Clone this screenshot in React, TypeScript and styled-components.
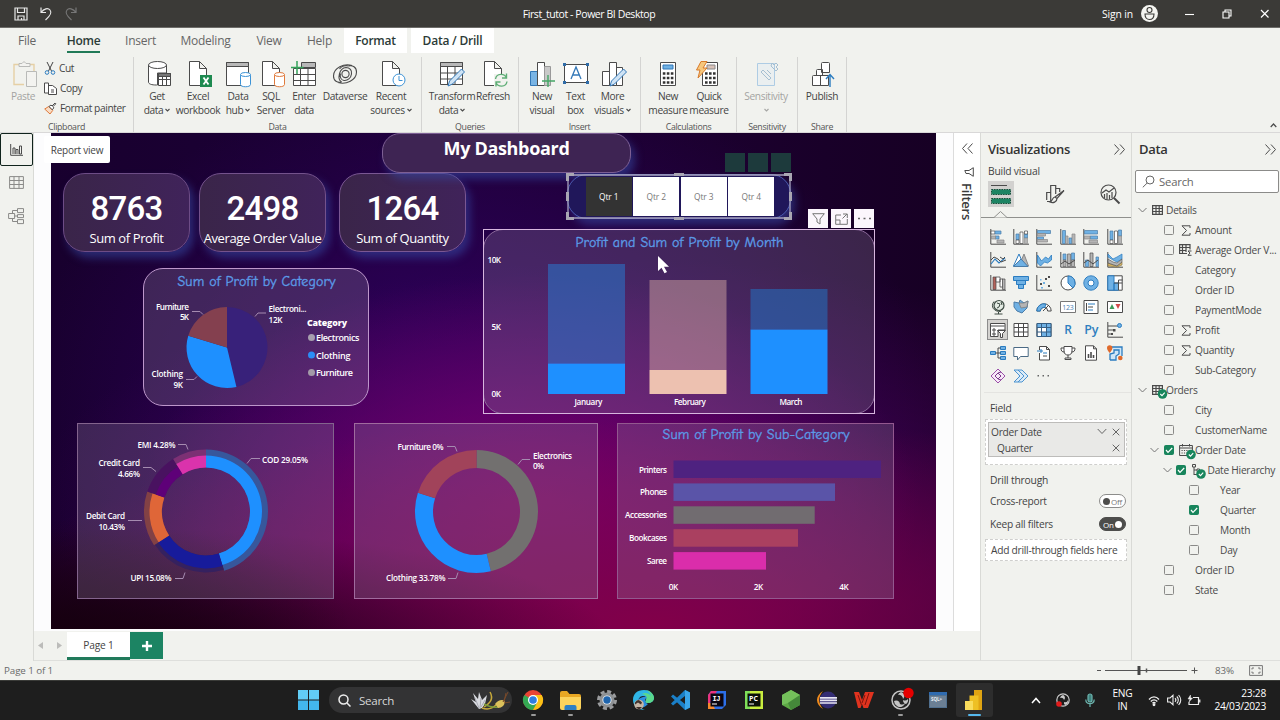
import React from "react";
import styled, { createGlobalStyle } from "styled-components";

const Global = createGlobalStyle`
  * { box-sizing: border-box; }
  body { margin: 0; background: #f1f2ee; overflow: hidden; }
  svg { display: block; flex: none; overflow: visible; }
`;

const DARK = "#4b4b4b";
const BLUE = "#6fb1e4";
const DEEP = "#2b7cc0";
const GREY = "#b5b5b5";
const GREEN = "#18855c";

const Window = styled.div`
  width: 1280px;
  height: 720px;
  display: flex;
  flex-direction: column;
  background: #f1f2ee;
  font-family: "Open Sans", "Noto Sans", sans-serif;
  font-size: 10.2px;
  letter-spacing: -0.25px;
  color: #444;
`;

/* ---------- title bar ---------- */
const TitleBar = styled.header`
  height: 28px;
  flex: none;
  display: grid;
  grid-template-columns: 1fr auto 1fr;
  align-items: center;
  background: #3b3a37;
  border-bottom: 1px solid #6d6c69;
  color: #fff;
`;
const QuickAccess = styled.div`
  display: flex;
  gap: 11px;
  padding-left: 14px;
`;
const WindowTitle = styled.div`
  font-size: 10.5px;
  letter-spacing: -0.42px;
  padding-right: 102px;
`;
const WindowControls = styled.div`
  display: flex;
  align-items: center;
  justify-content: flex-end;
  padding-right: 11px;
`;
const SignIn = styled.span`
  margin-right: 8px;
  font-size: 10.4px;
  letter-spacing: -0.15px;
`;
const Control = styled.span<{ $gap: number }>`
  margin-left: ${(p) => p.$gap}px;
`;

/* ---------- ribbon ---------- */
const TabRow = styled.nav`
  height: 25px;
  flex: none;
  display: flex;
  font-size: 12px;
  letter-spacing: -0.25px;
`;
const Tab = styled.div<{ $w: number; $white?: boolean; $on?: boolean }>`
  width: ${(p) => p.$w}px;
  height: 25px;
  display: flex;
  justify-content: center;
  white-space: nowrap;
  background: ${(p) => (p.$white ? "#fff" : "transparent")};
  color: ${(p) => (p.$on || p.$white ? "#2c3b37" : "#666")};
  font-weight: ${(p) => (p.$on ? 600 : p.$white ? 550 : 400)};
  letter-spacing: ${(p) => (p.$white ? "-0.22px" : "inherit")};
  span {
    line-height: 26px;
    height: 25px;
    border-bottom: 2px solid ${(p) => (p.$on ? "#217a57" : "transparent")};
  }
`;
const TabGap = styled.i<{ $w: number }>`
  width: ${(p) => p.$w}px;
  flex: none;
`;
const Ribbon = styled.div`
  height: 80px;
  flex: none;
  display: flex;
  border-bottom: 1px solid #d9d8d8;
`;
const Group = styled.section<{ $w: number }>`
  width: ${(p) => p.$w}px;
  margin-top: 4px;
  display: flex;
  flex-direction: column;
  justify-content: space-between;
  border-right: 1px solid #d4d4d2;
`;
const GroupBody = styled.div<{ $pad: number }>`
  display: flex;
  height: 64px;
  padding: 4px 0 0 ${(p) => p.$pad}px;
`;
const GroupLabel = styled.div`
  font-size: 8.8px;
  line-height: 10px;
  letter-spacing: -0.33px;
  text-align: center;
  color: #555;
`;
const BigButton = styled.div<{ $w: number; $dim?: boolean; $nudge?: number }>`
  width: ${(p) => p.$w}px;
  flex: none;
  display: flex;
  flex-direction: column;
  align-items: center;
  opacity: ${(p) => (p.$dim ? 0.45 : 1)};
  > svg { margin-left: ${(p) => p.$nudge ?? 0}px; }
`;
const ButtonText = styled.span`
  font-size: 10.2px;
  line-height: 13px;
  letter-spacing: -0.36px;
  white-space: nowrap;
  display: flex;
  align-items: center;
  gap: 2px;
  height: 13.5px;
  &:first-of-type { margin-top: 3px; }
`;
const SmallButtons = styled.div`
  display: flex;
  flex-direction: column;
  margin-left: 2px;
  margin-top: -3px;
`;
const SmallButton = styled.div`
  height: 20px;
  display: flex;
  align-items: center;
  gap: 3px;
  font-size: 10.2px;
  letter-spacing: -0.4px;
  white-space: nowrap;
`;
const RibbonEnd = styled.div`
  flex: 1;
  display: flex;
  justify-content: flex-end;
  align-items: flex-end;
  padding: 0 3px 4px 0;
`;

/* ---------- body ---------- */
const Body = styled.div`
  flex: 1;
  min-height: 0;
  display: flex;
`;
const Rail = styled.aside`
  width: 34px;
  flex: none;
  border-right: 1px solid #d9dad6;
  display: flex;
  flex-direction: column;
  align-items: center;
`;
const RailItem = styled.div<{ $on?: boolean }>`
  width: 33px;
  height: 33px;
  display: flex;
  align-items: center;
  justify-content: center;
  border: ${(p) => (p.$on ? "1.5px solid #10231c" : "0")};
  border-radius: 2px;
`;
const Center = styled.main`
  width: 946px;
  flex: none;
  display: flex;
  flex-direction: column;
`;
const Stage = styled.div`
  height: 498px;
  display: flex;
  background: #fcfcfd;
  position: relative;
`;
const Tip = styled.div`
  position: absolute;
  left: 10px;
  top: 3px;
  width: 66px;
  height: 27px;
  display: flex;
  align-items: center;
  justify-content: center;
  background: #fff;
  font-size: 10px;
  letter-spacing: -0.24px;
  border-radius: 2px;
  white-space: nowrap;
  z-index: 3;
`;
const Canvas = styled.div`
  position: relative;
  width: 885px;
  height: 496px;
  margin-left: 17px;
  flex: none;
  overflow: hidden;
  background:
    radial-gradient(ellipse 300px 110px at 0% 100%, rgba(20, 0, 12, 0.75), rgba(16, 0, 10, 0) 100%),
    radial-gradient(ellipse 480px 120px at 10% 104%, rgba(24, 0, 14, 0.9), rgba(18, 0, 10, 0) 100%),
    radial-gradient(ellipse 680px 210px at 68% 99%, rgba(132, 0, 72, 0.95), rgba(130, 0, 76, 0) 100%),
    radial-gradient(ellipse 390px 230px at 54% 75%, rgba(124, 0, 108, 0.9), rgba(120, 0, 110, 0) 100%),
    radial-gradient(ellipse 620px 270px at 66% 80%, rgba(90, 0, 108, 0.75), rgba(70, 0, 104, 0) 100%),
    radial-gradient(ellipse 460px 330px at 48% 56%, rgba(54, 0, 108, 0.8), rgba(50, 0, 110, 0) 100%),
    linear-gradient(90deg, #18002e 0%, #1d0038 40%, #1b002e 75%, #170024 100%);
`;
const Panel = styled.div<{ $x: number; $y: number; $w: number; $h: number; $r?: number; $line: string; $glow?: boolean }>`
  position: absolute;
  left: ${(p) => p.$x}px;
  top: ${(p) => p.$y}px;
  width: ${(p) => p.$w}px;
  height: ${(p) => p.$h}px;
  border: 1px solid ${(p) => p.$line};
  border-radius: ${(p) => p.$r ?? 0}px;
  background: rgba(152, 132, 164, 0.28);
  ${(p) => p.$glow && "box-shadow: 4px 6px 9px rgba(54, 70, 160, 0.58);"}
  svg { margin: -1px; }
`;
const Heading = styled(Panel)`
  background: #3e2453;
  color: #fff;
  font-size: 18px;
  font-weight: 700;
  line-height: 29px;
  letter-spacing: -0.32px;
  text-align: center;
`;
const Kpi = styled(Panel)`
  background: linear-gradient(90deg, #3a2549, #40235a);
  display: flex;
  flex-direction: column;
  align-items: center;
  color: #fff;
`;
const KpiValue = styled.div`
  font: 500 33px/36px Roboto, sans-serif;
  letter-spacing: -0.8px;
  margin-top: 17px;
`;
const KpiName = styled.div`
  font-size: 13px;
  line-height: 18px;
  letter-spacing: -0.4px;
  margin-top: 2px;
  white-space: nowrap;
`;
const Slicer = styled(Panel)`
  background: #20175a;
  display: flex;
  justify-content: center;
  align-items: center;
  gap: 1.5px;
  padding-left: 2px;
`;
const Quarter = styled.div<{ $on?: boolean }>`
  width: 46px;
  height: 39px;
  font-size: 8.4px;
  letter-spacing: -0.1px;
  line-height: 39px;
  text-align: center;
  background: ${(p) => (p.$on ? "#333" : "#fff")};
  color: ${(p) => (p.$on ? "#fff" : "#777")};
`;
const Overlay = styled.div<{ $x: number; $y: number }>`
  position: absolute;
  left: ${(p) => p.$x}px;
  top: ${(p) => p.$y}px;
  display: flex;
  gap: 3px;
`;
const HeaderIcon = styled.div<{ $green?: boolean }>`
  width: 20px;
  height: 19px;
  display: flex;
  align-items: center;
  justify-content: center;
  background: ${(p) => (p.$green ? "#1d3a3c" : "#fbf6fc")};
`;

const PageBar = styled.div`
  flex: 1;
  display: flex;
  align-items: flex-start;
  padding-top: 1px;
  border-bottom: 1px solid #dedfdc;
`;
const PageArrows = styled.div`
  width: 33px;
  height: 26px;
  display: flex;
  align-items: center;
  justify-content: space-between;
  padding: 0 5px 0 4px;
`;
const PageTab = styled.div`
  width: 63px;
  height: 27.5px;
  background: #fff;
  border-bottom: 3px solid #217a5b;
  font-size: 10.2px;
  letter-spacing: -0.2px;
  text-align: center;
  line-height: 27px;
`;
const AddPage = styled.div`
  width: 33px;
  height: 27px;
  background: #1c8463;
  display: flex;
  align-items: center;
  justify-content: center;
`;

/* ---------- side panes ---------- */
const Filters = styled.aside`
  width: 27px;
  margin-left: -27px;
  height: 498px;
  z-index: 2;
  flex: none;
  background: #fff;
  border-left: 1px solid #dcdcdc;
  display: flex;
  flex-direction: column;
  align-items: center;
  padding-top: 10px;
`;
const FilterMark = styled.span`
  margin: 13px 0 0 3px;
`;
const FiltersName = styled.div`
  writing-mode: vertical-rl;
  font-size: 13px;
  line-height: 16px;
  font-weight: 600;
  letter-spacing: -0.25px;
  margin-top: 6px;
  color: #3a3a3a;
`;
const VizPane = styled.aside`
  width: 151px;
  flex: none;
  border-left: 1px solid #d9dad6;
  border-bottom: 1px solid #dedfdc;
`;
const PaneHead = styled.div<{ $pad: string }>`
  display: flex;
  align-items: center;
  justify-content: space-between;
  height: 32px;
  padding: ${(p) => p.$pad};
  font-size: 13px;
  font-weight: 600;
  letter-spacing: -0.3px;
  color: #333;
`;
const BuildLabel = styled.div`
  padding-left: 7px;
  line-height: 14px;
  margin-top: -1px;
  letter-spacing: -0.22px;
  font-size: 10.3px;
`;
const ModeRow = styled.div`
  display: flex;
  height: 40px;
  padding: 3px 8px 0 7px;
  justify-content: space-between;
  border-bottom: 1px solid #8f908d;
  position: relative;
`;
const Mode = styled.div<{ $on?: boolean }>`
  width: 26px;
  height: 26px;
  display: flex;
  align-items: center;
  justify-content: center;
  background: ${(p) => (p.$on ? "#d2d1cf" : "transparent")};
`;
const Notch = styled.div`
  position: absolute;
  left: 13px;
  bottom: -1px;
`;
const VizGrid = styled.div`
  display: grid;
  grid-template-columns: repeat(6, 23.4px);
  grid-auto-rows: 23.3px;
  padding: 7px 0 0 5px;
  height: 174px;
  margin-right: 7px;
`;
const VizCell = styled.div<{ $on?: boolean }>`
  display: flex;
  align-items: center;
  justify-content: center;
  margin: ${(p) => (p.$on ? "2px" : "0")};
  outline: ${(p) => (p.$on ? "1px solid #8c8c8c" : "0")};
  background: ${(p) => (p.$on ? "#d4d3d0" : "transparent")};
`;
const GlyphText = styled.span<{ $size: number }>`
  font-size: ${(p) => p.$size}px;
  font-weight: 600;
  color: #2f7fc0;
  line-height: 16px;
`;
const FieldBlock = styled.div`
  margin-left: 3px;
  border-top: 1px solid #e4e4e1;
  padding: 8px 5px 0 3px;
`;
const FieldTitle = styled.div<{ $strong?: boolean }>`
  font-size: 10.3px;
  line-height: 14px;
  padding-left: 3px;
  margin-top: ${(p) => (p.$strong ? 8 : 0)}px;
  letter-spacing: -0.2px;
  font-weight: ${(p) => (p.$strong ? 500 : 400)};
  color: #3f3f3f;
`;
const Well = styled.div<{ $h: number; $mt: number }>`
  margin: ${(p) => p.$mt}px 0 0 -2px;
  height: ${(p) => p.$h}px;
  width: 142px;
  border: 1px dashed #cfcfcd;
  background: #fff;
  padding: 2px 1px;
`;
const WellHint = styled.div`
  line-height: 16px;
  padding-left: 4px;
  white-space: nowrap;
  letter-spacing: -0.25px;
`;
const Chip = styled.div`
  height: 35px;
  width: 137px;
  margin-left: 1px;
  border: 1px solid #bdbcba;
  background: #e9e9e7;
`;
const ChipRow = styled.div<{ $pad: number }>`
  height: 16.5px;
  display: flex;
  align-items: center;
  gap: 5px;
  padding: 1px 4px 0 ${(p) => p.$pad}px;
  span { flex: 1; }
`;
const OptionRow = styled.div<{ $mt: number }>`
  margin: ${(p) => p.$mt}px 0 0 3px;
  height: 14px;
  width: 136px;
  display: flex;
  align-items: center;
  justify-content: space-between;
`;
const Toggle = styled.span<{ $on?: boolean }>`
  width: 27px;
  height: 14px;
  border-radius: 7px;
  border: 1px solid ${(p) => (p.$on ? "#4d4d4b" : "#8c8c8a")};
  background: ${(p) => (p.$on ? "#4d4d4b" : "#fff")};
  color: ${(p) => (p.$on ? "#fff" : "#777")};
  display: flex;
  flex-direction: ${(p) => (p.$on ? "row-reverse" : "row")};
  align-items: center;
  justify-content: space-between;
  padding: 0 3px;
  font-size: 8px;
  letter-spacing: -0.2px;
  i { width: 7px; height: 7px; border-radius: 50%; background: ${(p) => (p.$on ? "#fff" : "#4d4d4b")}; }
`;

const DataPane = styled.aside`
  width: 149px;
  flex: none;
  border-left: 1px solid #d9dad6;
  border-bottom: 1px solid #dedfdc;
`;
const SearchBox = styled.div`
  margin: 5px 0 7px 3px;
  width: 144px;
  height: 23px;
  border: 1px solid #8b8b89;
  border-radius: 2px;
  background: #fff;
  display: flex;
  align-items: center;
  gap: 4px;
  padding-left: 6px;
  font-size: 11.3px;
  letter-spacing: -0.2px;
  color: #666;
`;
const TreeRow = styled.div<{ $indent: number }>`
  height: 20px;
  display: flex;
  align-items: center;
  padding-left: ${(p) => p.$indent}px;
  white-space: nowrap;
  color: #4a4a4a;
`;
const Slot = styled.span<{ $w: number }>`
  width: ${(p) => p.$w}px;
  flex: none;
  display: flex;
  align-items: center;
  justify-content: center;
`;
const Check = styled.span<{ $on?: boolean }>`
  width: 10px;
  height: 10px;
  flex: none;
  border-radius: 1.5px;
  border: 1px solid ${(p) => (p.$on ? GREEN : "#8a8a88")};
  background: ${(p) => (p.$on ? GREEN : "transparent")};
  svg { margin: -1px; }
`;

/* ---------- status bar and taskbar ---------- */
const StatusBar = styled.footer`
  height: 19px;
  flex: none;
  display: flex;
  align-items: center;
  justify-content: space-between;
  padding: 0 17px 1px 4px;
  font-size: 9.8px;
  letter-spacing: -0.1px;
  color: #6a6a6a;
`;
const Zoom = styled.div`
  display: flex;
  align-items: center;
  gap: 15px;
`;
const Taskbar = styled.footer`
  height: 40px;
  flex: none;
  display: flex;
  align-items: center;
  background: #1e1e1e;
  border-top: 1px solid #3a3b38;
  color: #fff;
  padding: 0 0 1px 298px;
`;
const TaskSearch = styled.div`
  width: 183px;
  height: 26px;
  border-radius: 13px;
  background: #333334;
  margin: 0 3px 0 10px;
  display: flex;
  align-items: center;
  gap: 8px;
  padding: 0 2px 0 9px;
  font-size: 11.6px;
  letter-spacing: -0.25px;
  color: #d6d6d6;
  span { flex: 1; }
`;
const TaskItem = styled.div<{ $dot?: boolean; $on?: boolean }>`
  width: 36.75px;
  height: 34px;
  display: flex;
  align-items: center;
  justify-content: center;
  position: relative;
  background: ${(p) => (p.$on ? "#2d2d2d" : "transparent")};
  border-radius: 3px;
  &::after {
    content: "";
    display: ${(p) => (p.$dot || p.$on ? "block" : "none")};
    position: absolute;
    bottom: 1px;
    width: ${(p) => (p.$on ? 13 : 5)}px;
    height: 2.5px;
    border-radius: 2px;
    background: ${(p) => (p.$on ? "#56b9ee" : "#9a9a9a")};
  }
`;
const Tray = styled.div`
  margin-left: auto;
  display: flex;
  align-items: center;
  padding-right: 14px;
  line-height: 13px;
`;
const TrayText = styled.div<{ $ml: number; $right?: boolean }>`
  margin-left: ${(p) => p.$ml}px;
  text-align: ${(p) => (p.$right ? "right" : "center")};
`;
const TrayIcon = styled.span<{ $ml: number }>`
  margin-left: ${(p) => p.$ml}px;
`;

/* ---------- icon helpers ---------- */
type IconProps = { w?: number; h?: number; vb?: string; sw?: number; c?: string; children: React.ReactNode };
const Icon = ({ w = 16, h = 16, vb, sw = 1, c = DARK, children }: IconProps) => (
  <svg width={w} height={h} viewBox={vb ?? `0 0 ${w} ${h}`} fill="none" stroke={c} strokeWidth={sw}>
    {children}
  </svg>
);
const Caret = () => (
  <Icon w={5} h={4} sw={1.1}>
    <path d="M.5 1l2 2 2-2" />
  </Icon>
);
const DoubleChevron = ({ left }: { left?: boolean }) => (
  <Icon w={11} h={11}>
    <path d={left ? "M5 .5l-4.500 5 4.500 5M10.500 .5L6 5.500l4.500 5" : "M.5 .5L5 5.500l-4.500 5M6 .5l4.500 5-4.500 5"} />
  </Icon>
);
const TreeChevron = () => (
  <Icon w={9} h={6} c="#777">
    <path d="M.5 1l4 4 4-4" />
  </Icon>
);
const Doc = ({ x = 0 }: { x?: number }) => (
  <path fill="#fff" d={`M${x + 0.5} .5h10l7 7v17h-17zM${x + 10.5} .5v7h7`} />
);

const ribbonIcons: Record<string, React.ReactNode> = {
  paste: (
    <Icon w={26} h={26}>
      <path stroke="#d9a94f" strokeWidth="1.400" d="M9 3.500H2v20h10M17 3.500h5v7" />
      <path stroke="#777" fill="#f6f6f4" d="M7 5.500v-3h3l2-2 2 2h4v3zM14.500 10.500h10v15h-10z" />
    </Icon>
  ),
  get: (
    <Icon w={26} h={26}>
      <path fill="#fff" d="M2.500 4v17c0 2 3 3 8 3h1V12h9V4" />
      <ellipse cx="11.500" cy="4" rx="9" ry="3.500" fill="#fff" />
      <path fill="#fff" d="M12.500 12.500h12v12h-12zM12.500 18.500h12M16.500 14v10.500M20.500 14v10.500" />
      <path fill="#777" d="M12.500 12.500h12v3h-12z" />
    </Icon>
  ),
  excel: (
    <Icon w={24} h={26}>
      <Doc x={1} />
      <path fill="#1e8a50" stroke="none" d="M12 14h12v12H12z" />
      <path stroke="#fff" strokeWidth="1.800" d="M15.500 16.500l5 7M20.500 16.500l-5 7" />
    </Icon>
  ),
  hub: (
    <Icon w={26} h={26}>
      <path fill="#fff" d="M1.500 1.500h22v23h-22z" />
      <path fill="#b8b8b8" d="M1.500 1.500h22v4h-22z" />
      <path stroke="#3d93d6" fill="#fff" d="M15.500 13.500v10c0 3 10 3 10 0v-10" />
      <ellipse stroke="#3d93d6" fill="#fff" cx="20.500" cy="13.500" rx="5" ry="2" />
    </Icon>
  ),
  sql: (
    <Icon w={24} h={26}>
      <Doc x={1} />
      <path stroke="#e07a3c" fill="#fff" d="M13.500 13.500v10c0 3 10 3 10 0v-10" />
      <ellipse stroke="#e07a3c" fill="#fff" cx="18.500" cy="13.500" rx="5" ry="2" />
    </Icon>
  ),
  enter: (
    <Icon w={26} h={26}>
      <path fill="#fff" d="M2.500 7.500h22v17h-22zM2.500 13.500h22M2.500 19.500h22M9.500 7.500v17M17 7.500v17" />
      <path fill="#b8b8b8" d="M10.500 1.500h14v5h-14z" />
      <path stroke="#35a35a" strokeWidth="1.500" d="M6 0v13M0 6.500h12.500" />
    </Icon>
  ),
  verse: (
    <Icon w={26} h={26} sw={1.1}>
      <path d="M20 4.500C12 2 1.500 7 1.500 15c0 5 4 7 8 6M6 21.500C14 24 24.500 19 24.500 11c0-5-4-7-8-6" />
      <path d="M9.500 21C5 18 7 7 14 6.500c4 0 6 3 5.500 6.500-.5 4-4 7-7.500 6.500-3-.5-4.500-3.500-3.500-7M16.500 5c-3-1-7 0-9 3" />
      <circle cx="13.500" cy="13" r="3.600" />
    </Icon>
  ),
  recent: (
    <Icon w={24} h={26}>
      <Doc x={1} />
      <circle cx="18" cy="19" r="6" stroke="#3d93d6" fill="#fff" />
      <path stroke="#3d93d6" d="M18 15v4.500h3.500" />
    </Icon>
  ),
  transform: (
    <Icon w={26} h={26}>
      <path fill="#fff" d="M1.500 1.500h22v22h-22zM1.500 12h22M1.500 18h22M8.500 5.500v18M16 5.500v18" />
      <path fill="#b8b8b8" d="M1.500 1.500h22v4h-22z" />
      <path stroke="#3378b8" fill="#cfe3f4" d="M9 25l1.500-5L22.500 8l3 3-12 12z" />
    </Icon>
  ),
  refresh: (
    <Icon w={24} h={26}>
      <Doc />
      <path stroke="#f1f2ee" strokeWidth="4" fill="#f1f2ee" d="M12 15h11v10H12z" />
      <path stroke="#5fae76" strokeWidth="1.400" d="M11.500 18c1-6 9-6 11-1M22.500 12.500V17H18M23 20.500c-1 6-9 6-11 1M12 25.500V21h4.500" />
    </Icon>
  ),
  newvis: (
    <Icon w={26} h={26}>
      <path fill="#79b4e4" stroke="#3378b8" d="M1.500 10.500h7v14h-7z" />
      <path fill="#fff" d="M8.500 1.500h7v23h-7z" />
      <path fill="#c9c9c9" d="M15.500 5.500h6v19h-6z" stroke="#999" />
      <path stroke="#45a767" strokeWidth="1.400" d="M19 14v12M13 20h13" />
    </Icon>
  ),
  text: (
    <Icon w={28} h={26}>
      <path fill="#fff" d="M2.500 3.500h23v18h-23z" />
      <path stroke="#3378b8" strokeWidth="1.300" d="M9 18l5-12 5 12M11 14h6" />
      <path stroke="none" fill="#2f6ca8" d="M1 2h3v3H1zM24 2h3v3h-3zM1 20h3v3H1zM24 20h3v3h-3z" />
    </Icon>
  ),
  more: (
    <Icon w={26} h={26}>
      <path fill="#fff" d="M1.500 10.500h7v14h-7zM8.500 1.500h7v23h-7zM15.500 6.500h6v18h-6z" />
      <path stroke="#3378b8" fill="#cfe3f4" d="M9 25l1.500-5L22.500 8l3 3-12 12z" />
    </Icon>
  ),
  measure: (
    <Icon w={18} h={26}>
      <path fill="#fff" d="M1.500 1.500h15v23h-15z" />
      <path fill="#6fb1e4" stroke="#3378b8" d="M4 4h10v4H4z" />
      <path stroke="#333" strokeWidth="2.600" strokeDasharray="2.600 1.400" d="M3.800 12.500h11M3.800 17h11M3.800 21.500h11" />
    </Icon>
  ),
  quick: (
    <Icon w={26} h={26}>
      <path fill="#fff" d="M7.500 1.500h15v23h-15z" />
      <path fill="#d9c2b8" stroke="#888" d="M12 4h8v4h-8z" />
      <path stroke="#333" strokeWidth="2.600" strokeDasharray="2.600 1.400" d="M10 12.500h11M10 17h11M10 21.500h11" />
      <path fill="#f6c77d" stroke="#d97b2b" d="M6 .5h6L8 7h4L3 17l2-8H1.500z" />
    </Icon>
  ),
  sens: (
    <Icon w={26} h={26}>
      <path fill="#e3ecf4" stroke="#5fa0d8" d="M3.500 2.500h17v22h-17z" />
      <path stroke="#4d82ae" d="M7 11l8 8M9 9l8 8M7 11l2-2M15 19l2-2M17 5l5 5 2-2-2-2 2-2-2-2-2 2-2-2zM13 9l4 4" />
    </Icon>
  ),
  publish: (
    <Icon w={24} h={26}>
      <path fill="#fff" d="M10.500 2.500q0-1 1-1h6q1 0 1 1v9h-8zM1.500 15.500q0-1 1-1h7v10h-8zM5.500 9.500q0-1 1-1h5v6h-6zM10.500 14.500h7v10h-8v-10z" />
      <path stroke="#2b7cc0" strokeWidth="1.400" d="M19 26V14M15 18l4-4.500 4 4.500" />
    </Icon>
  ),
};

type BigProps = { w: number; icon: string; a: string; b?: string; caret?: boolean; dim?: boolean; nudge?: number };
const Big = ({ w, icon, a, b, caret, dim, nudge }: BigProps) => (
  <BigButton $w={w} $dim={dim} $nudge={nudge}>
    {ribbonIcons[icon]}
    <ButtonText>{a}</ButtonText>
    <ButtonText>
      {b}
      {caret && <Caret />}
    </ButtonText>
  </BigButton>
);

/* ---------- visual gallery icons ---------- */
const axis = <path d="M.8 0v15.200H16" />;
const gallery: React.ReactNode[] = [
  <Icon>{axis}<path fill="#fff" strokeWidth=".7" d="M1 2h4v3H1z" /><path fill={BLUE} stroke="#4a7ca8" strokeWidth=".7" d="M5 2h6v3H5zM5 7h4v3H5z" /><path fill={GREY} stroke="#888" strokeWidth=".7" d="M1.500 7h4v3h-4zM7 11h7v3H7z" /></Icon>,
  <Icon>{axis}<path fill={BLUE} stroke="#4a7ca8" strokeWidth=".7" d="M3 5h3v6H3zM11.500 5h3v4h-3z" /><path fill="#fff" strokeWidth=".7" d="M3 11h3v3.500H3zM7 3h3v11.500H7zM11.500 2h3v3h-3z" /><path fill={GREY} stroke="#888" strokeWidth=".6" d="M11.500 9h3v5.500h-3z" /></Icon>,
  <Icon>{axis}<path fill={BLUE} stroke="#4a7ca8" strokeWidth=".7" d="M1.500 1.500h13v3h-13zM1.500 8h6v2.500h-6z" /><path fill={GREY} stroke="#888" strokeWidth=".7" d="M1.500 4.500h8V7h-8zM1.500 10.500h10V13h-10z" /></Icon>,
  <Icon>{axis}<path fill={BLUE} stroke="#4a7ca8" strokeWidth=".7" d="M2.500 1.500h3v13h-3zM9 9h3v5.500H9z" /><path fill={GREY} stroke="#888" strokeWidth=".7" d="M5.500 7h2.500v7.500H5.500zM12 5h3v9.500h-3z" /></Icon>,
  <Icon>{axis}<path fill={BLUE} stroke="#4a7ca8" strokeWidth=".7" d="M1.500 1.500h13v3.500h-13zM7 7h7.500v3H7z" /><path fill={GREY} stroke="#888" strokeWidth=".7" d="M1.500 7H7v3H1.500zM6 11h8.500v3H6z" /></Icon>,
  <Icon>{axis}<path fill={BLUE} stroke="#4a7ca8" strokeWidth=".7" d="M3 2h3v9H3zM11.500 1h3v6h-3z" /><path fill="#fff" strokeWidth=".7" d="M3 11h3v3.500H3zM7.500 2h3v12.500h-3z" /><path fill={GREY} stroke="#888" strokeWidth=".7" d="M11.500 7h3v7.500h-3z" /></Icon>,

  <Icon>{axis}<path stroke={DEEP} strokeWidth="1.100" d="M1 12l4-5 4 4 6-5" /><path d="M1 8l3-3 4 2 3 3 5-2M10 5l3 2 2-2" /></Icon>,
  <Icon><path fill={GREY} stroke="#888" d="M6 14l5-12 4.500 12z" /><path fill="#fff" stroke={DEEP} d="M.5 14L6 2l5 12z" /><path fill={BLUE} stroke="#4a7ca8" d="M.5 14.500L8 7l7 7.500z" /></Icon>,
  <Icon>{axis}<path fill={BLUE} stroke={DEEP} strokeWidth=".8" d="M1.500 3l4 6 4-4 3 2 3-4v5l-4 3-3-1-4 4-3-3z" /></Icon>,
  <Icon>{axis}<path fill={BLUE} stroke="#4a7ca8" strokeWidth=".7" d="M3 2h3v6H3zM11.500 1h3v7h-3z" /><path fill={GREY} stroke="#666" strokeWidth=".7" d="M3 8h3v6.500H3zM7.500 2h3v12.500h-3zM11.500 8h3v6.500h-3z" /><path d="M1 12l4-3 4 3 6-4" /></Icon>,
  <Icon>{axis}<path fill={BLUE} stroke="#4a7ca8" strokeWidth=".7" d="M2.500 8h3v6.500h-3zM13 5h2.500v9.500H13z" /><path fill={GREY} strokeWidth=".7" d="M7 1h3v13.500H7z" /><path d="M1 11l4-3 5 4 5-4" /></Icon>,
  <Icon>{axis}<path fill={BLUE} stroke={DEEP} strokeWidth=".7" d="M1 2l5 5 4-2 5-3v5l-5 3-4-2-5-3z" /><path fill="#d9b665" stroke="#8a7a4a" strokeWidth=".7" d="M1 11l5 2 4 1 5-4v3l-5 2-9-1z" /><path fill={GREY} strokeWidth=".6" d="M1 7l5 3 4 1 5-4v3l-5 4-9-3z" /></Icon>,

  <Icon>{axis}<path fill="#b4635b" strokeWidth=".7" d="M3 2h3v12.500H3z" /><path fill="#fff" strokeWidth=".8" d="M6 2h4v5H6zM10 4h3v8h-3z" /><path fill={GREY} strokeWidth=".7" d="M12.500 4h2.500v10.500h-2.500z" /></Icon>,
  <Icon><path fill={BLUE} stroke={DEEP} d="M.5 1.500h15v4H.5zM3.500 5.500h9v4h-9zM5.500 9.500h5v4h-5z" /></Icon>,
  <Icon>{axis}<path stroke="none" fill={DARK} d="M4 8h2v2H4zM9 3h2v2H9zM12 1h2v2h-2zM12 10h2v2h-2z" /><path stroke="none" fill={BLUE} d="M7 7h2v2H7zM5 12h2v1.500H5zM4 4h1.500v1.500H4z" /></Icon>,
  <Icon><circle cx="8" cy="8" r="7" fill="#fff" /><path fill={BLUE} stroke={DEEP} d="M8 1v7l5 5A7 7 0 0 0 8 1z" /></Icon>,
  <Icon><circle cx="8" cy="8" r="5" stroke={BLUE} strokeWidth="4" /><circle cx="8" cy="8" r="7.200" stroke={DEEP} /><circle cx="8" cy="8" r="3" fill="#fff" stroke={DEEP} /></Icon>,
  <Icon><path fill="#fff" d="M.8.800h14.400v14.400H.8z" /><path fill={BLUE} stroke={DEEP} d="M.8.800H7v14.400H.8zM7 8h4.500v7.200H7z" /><path d="M7 8h8.200M11.500 5v10M11.500 5h4" /></Icon>,

  <Icon><circle cx="9" cy="6.500" r="5" stroke="#3c4a42" strokeWidth="1.200" fill="#e3ebe3" /><path stroke="#3c4a42" d="M4 2.500c-4 5 0 10.500 7 10M4.500 15h8M8.500 13v2M7 4l3 1-1 3-2 1M11 3l1 3" /></Icon>,
  <Icon><path fill={BLUE} stroke="#4a7ca8" d="M1 3l5 1 1-3 4 3 4-2-1 7-5 5-5-2-3-4z" /><path fill={GREY} stroke="#777" strokeWidth=".7" d="M6 4l5 0 4-2-1 6-6 1z" /></Icon>,
  <Icon><path fill="#fff" d="M.8 12a7.200 7.200 0 0 1 14.400 0h-3.500a3.700 3.700 0 0 0-7.400 0z" /><path fill={BLUE} stroke={DEEP} d="M.8 12a7.200 7.200 0 0 1 9-7l-1 3.500A3.700 3.700 0 0 0 4.300 12z" /><path d="M7 12l5-5" /></Icon>,
  <Icon><path fill="#fff" stroke="#777" d="M.5 2.500h15v11H.5z" /><text x="8" y="11" textAnchor="middle" fontSize="7" stroke="none" fill="#4a83b5">123</text></Icon>,
  <Icon><path fill="#fff" d="M1 1.500h14v13H1z" /><path stroke={DEEP} d="M5 5h7M5 11h5" /><path d="M5 8h5M3.500 4v8" /></Icon>,
  <Icon><path fill="#fff" d="M.5 2.500h15v11H.5z" /><path fill="#3c9a5a" stroke="none" d="M2.500 10L5 5l2.500 5z" /><path fill="#d24a4a" stroke="none" d="M8.500 5h5L11 10z" /></Icon>,

  <Icon><path fill="#fff" d="M.5 1.500h14.500V8H8v6.500H.5z" /><path d="M.5 4h14M3 7h2v2H3zM3 11h2v2H3z" /><path fill="#fff" d="M7.500 8.500h8l-3 3v4h-2v-4z" /></Icon>,
  <Icon><path fill="#fff" d="M1 1.500h14v13H1zM1 5.500h14M1 10h14M5.500 1.500v13M10.500 1.500v13" /></Icon>,
  <Icon><path fill="#fff" d="M1 1.500h14v13H1z" /><path fill={BLUE} stroke="none" d="M1 1.500h14v4H1zM10.500 5.500H15v9h-4.500zM5.500 10h5v4.500h-5z" /><path stroke="#355f85" d="M1 1.500h14v13H1zM1 5.500h14M1 10h14M5.500 1.500v13M10.500 1.500v13" /></Icon>,
  <GlyphText $size={12}>R</GlyphText>,
  <GlyphText $size={12.5}>Py</GlyphText>,
  <Icon>{axis}<path d="M1 4h10M1 8h6M1 12h4" /><circle cx="12.500" cy="3.500" r="2" fill={BLUE} stroke={DEEP} /><path stroke="none" fill={DARK} d="M6 7h2.500v2.500H6zM4 11h2v2H4z" /></Icon>,

  <Icon><path fill={BLUE} stroke={DEEP} d="M.5 6.500h5v3h-5zM10.500 1.500h5v3h-5zM10.500 6.500h5v3h-5zM10.500 11.500h5v3h-5z" /><path d="M5.500 8h5M8 3v10M8 3h2.500M8 13h2.500" /></Icon>,
  <Icon><path fill="#fff" stroke="#4a6a85" d="M.8 2.500h14.400v9H7.500L4.500 15v-3.500H.8z" /></Icon>,
  <Icon><path fill="#fff" d="M3.500 5V1.500h7l3 3v10.500h-10V8M10.500 1.500v3h3M7 11h4" /><path stroke={DEEP} d="M1 6h6M5 4v4M7 8h4" /></Icon>,
  <Icon><path fill="#fff" d="M4 1.500h8V6c0 3-2 4-4 4s-4-1-4-4zM4 3H1c0 3 1 4 3.500 4M12 3h3c0 3-1 4-3.500 4M8 10v3M5 14.500h6v-1.500H5z" /></Icon>,
  <Icon><path fill="#fff" d="M2.500 .8h8l3 3v11.400h-11zM10.500 .8v3h3" /><path strokeWidth="1.600" d="M5.500 13V9M8 13V7M10.500 13v-3" /></Icon>,
  <Icon><path fill="#cfe6f7" stroke={DEEP} strokeWidth="1.300" d="M3 2h12v9M3 15V9l4-1V5h5v4l-3 2v4H3" /><path fill="#df6a2c" stroke="none" d="M0 3a2.700 2.700 0 0 1 5.400 0c0 2-2.700 5-2.700 5S0 5 0 3zM11 13a2.300 2.300 0 1 1 4.600 0 2.300 2.300 0 0 1-4.600 0z" /></Icon>,

  <Icon><path stroke="#9a4fa8" fill="#f7e8f8" d="M8 1l7 7-7 7-7-7z" /><path stroke="#7b3c8a" d="M8 5l3-1M5 8l3-3 3 3-3 3-3-3M8 11l3 1" /></Icon>,
  <Icon><path stroke="#4b93d0" fill="#dcebf7" d="M1 2h8l6 6-6 6H1l6-6zM5 2l6 6-6 6" /></Icon>,
  <Icon><path stroke="none" fill="#666" d="M1.500 7h1.500v1.500H1.500zM6.500 7H8v1.500H6.500zM11.500 7H13v1.500h-1.500z" /></Icon>,
];

/* ---------- chart drawing ---------- */
const polar = (cx: number, cy: number, r: number, deg: number) => {
  const t = ((deg - 90) * Math.PI) / 180;
  return `${(cx + r * Math.cos(t)).toFixed(2)} ${(cy + r * Math.sin(t)).toFixed(2)}`;
};
const arc = (cx: number, cy: number, inner: number, outer: number, a: number, b: number) => {
  const big = b - a > 180 ? 1 : 0;
  return `M${polar(cx, cy, outer, a)}A${outer} ${outer} 0 ${big} 1 ${polar(cx, cy, outer, b)}L${polar(cx, cy, inner, b)}A${inner} ${inner} 0 ${big} 0 ${polar(cx, cy, inner, a)}Z`;
};
type LabelProps = { x: number; y: number; w: number; anchor?: "start" | "middle" | "end"; size?: number; bold?: boolean; children: string };
const Label = ({ x, y, w, anchor = "start", size = 8.2, bold, children }: LabelProps) => (
  <text x={x} y={y} textAnchor={anchor} textLength={w} fontSize={size} fontWeight={bold ? 800 : 550} letterSpacing="0" fill="#fff" stroke="none">
    {children}
  </text>
);
const ChartTitle = ({ x, y, w, children }: { x: number; y: number; w: number; children: string }) => (
  <text x={x} y={y} textLength={w} textAnchor="middle" fontSize="14" letterSpacing="0" fontFamily='"Comic Sans MS", "Comic Neue", "Noto Sans", sans-serif' fill="#5b9ae6" stroke="#5b9ae6" strokeWidth=".35">
    {children}
  </text>
);
const Leader = ({ d }: { d: string }) => <path d={d} fill="none" stroke="#a58bb0" strokeWidth="1" />;

const PieChart = () => (
  <svg width="226" height="138" viewBox="143 268 226 138">
    <ChartTitle x={256.5} y={286} w={158}>Sum of Profit by Category</ChartTitle>
    <path d={arc(227, 347.5, 0, 40.5, 0, 166.5)} fill="#38217a" />
    <path d={arc(227, 347.5, 0, 40.5, 166.5, 287)} fill="#1e90ff" />
    <path d={arc(227, 347.5, 0, 40.5, 287, 360)} fill="#84404f" />
    <Leader d="M192 311.500h8l3 3M255 316.500l3-3.500h8M186 379.500h8l3-3" />
    <Label x={189} y={309.5} w={33} anchor="end">Furniture</Label>
    <Label x={189} y={320} w={9} anchor="end">5K</Label>
    <Label x={268.5} y={312} w={38}>Electroni...</Label>
    <Label x={268.5} y={323} w={14}>12K</Label>
    <Label x={183} y={377} w={31.5} anchor="end">Clothing</Label>
    <Label x={183} y={388} w={9.5} anchor="end">9K</Label>
    <Label x={307} y={325.5} w={40} size={8.8} bold>Category</Label>
    <circle cx="311.500" cy="337.500" r="3.500" fill="#a79fae" />
    <circle cx="311.500" cy="355" r="3.500" fill="#2b8df5" />
    <circle cx="311.500" cy="372.500" r="3.500" fill="#a39aa8" />
    <Label x={316} y={341} w={43.5} size={9}>Electronics</Label>
    <Label x={316} y={358.5} w={34.5} size={9}>Clothing</Label>
    <Label x={316} y={376} w={37} size={9}>Furniture</Label>
  </svg>
);

const months = [
  { name: "January", x: 548, top: 264, hi: 363.5, base: "rgba(43,113,196,.6)", fill: "#1e90ff", w: 28 },
  { name: "February", x: 649.5, top: 280, hi: 370, base: "rgba(238,190,174,.42)", fill: "#edc1b0", w: 32 },
  { name: "March", x: 750.5, top: 289, hi: 329.5, base: "rgba(37,110,190,.58)", fill: "#1e90ff", w: 23 },
];
const MonthChart = () => (
  <svg width="392" height="184" viewBox="483 229 392 184">
    <rect x="483.500" y="229.500" width="391" height="184" fill="none" stroke="#d7b6de" />
    <ChartTitle x={679.5} y={247} w={208}>Profit and Sum of Profit by Month</ChartTitle>
    <Label x={501} y={262.5} w={13.5} anchor="end">10K</Label>
    <Label x={501} y={329.5} w={9.5} anchor="end">5K</Label>
    <Label x={501} y={397} w={9.5} anchor="end">0K</Label>
    {months.map((m) => (
      <g key={m.name}>
        <rect x={m.x} y={m.top} width="77" height={m.hi - m.top} fill={m.base} />
        <rect x={m.x} y={m.hi} width="77" height={394 - m.hi} fill={m.fill} />
        <Label x={m.x + 40.5} y={405} w={m.w} anchor="middle">{m.name}</Label>
      </g>
    ))}
  </svg>
);

const PaymentDonut = () => {
  const cx = 206, cy = 511.5;
  return (
    <svg width="257" height="176" viewBox="77 423 257 176">
      <path d={arc(cx, cy, 44, 62, 0, 163)} fill="#37579c" />
      <path d={arc(cx, cy, 44, 61, 163, 237)} fill="#35215f" />
      <path d={arc(cx, cy, 44, 62, 237, 288.7)} fill="#824145" />
      <path d={arc(cx, cy, 44, 62, 288.7, 328)} fill="#491260" />
      <path d={arc(cx, cy, 44, 62, 328, 360)} fill="#7c3074" />
      <path d={arc(cx, cy, 44, 56, 0, 163)} fill="#1e90ff" />
      <path d={arc(cx, cy, 44, 57, 163, 237)} fill="#171b9b" />
      <path d={arc(cx, cy, 44, 56.5, 237, 288.7)} fill="#df6638" />
      <path d={arc(cx, cy, 44, 53, 288.7, 328)} fill="#5e0078" />
      <path d={arc(cx, cy, 44, 56, 328, 360)} fill="#da33ac" />
      <Leader d="M178 444.500h8l2 5M247 463.500l4-5h9M143 467.500h8l5 4M128 520.500h14M175 578.500h8l2-6" />
      <Label x={137.5} y={447.5} w={38}>EMI 4.28%</Label>
      <Label x={262} y={462.5} w={46}>COD 29.05%</Label>
      <Label x={140} y={466} w={41.5} anchor="end">Credit Card</Label>
      <Label x={140} y={476.5} w={22} anchor="end">4.66%</Label>
      <Label x={125} y={518.5} w={39} anchor="end">Debit Card</Label>
      <Label x={125} y={529.5} w={26.5} anchor="end">10.43%</Label>
      <Label x={130.5} y={581} w={41}>UPI 15.08%</Label>
    </svg>
  );
};

const CategoryDonut = () => {
  const cx = 476.5, cy = 511.5;
  return (
    <svg width="244" height="176" viewBox="354 423 244 176">
      <path d={arc(cx, cy, 43.5, 61.5, 0, 166.5)} fill="#72706f" />
      <path d={arc(cx, cy, 43.5, 61.5, 166.5, 287.7)} fill="#1e90ff" />
      <path d={arc(cx, cy, 43.5, 61.5, 287.7, 360)} fill="#a1435a" />
      <Leader d="M447 446.500h8l2 5M518 464.500l4-5h8M448 578.500h8l2-6" />
      <Label x={397.5} y={449.5} w={46}>Furniture 0%</Label>
      <Label x={533} y={458.5} w={39}>Electronics</Label>
      <Label x={533} y={469} w={11}>0%</Label>
      <Label x={386} y={581} w={59.5}>Clothing 33.78%</Label>
    </svg>
  );
};

const products = [
  { name: "Printers", end: 881, fill: "#4e2280", w: 28 },
  { name: "Phones", end: 835, fill: "#5a54a8", w: 27 },
  { name: "Accessories", end: 814.7, fill: "#716c70", w: 42 },
  { name: "Bookcases", end: 798, fill: "#aa4060", w: 38 },
  { name: "Saree", end: 766, fill: "#da2dab", w: 20 },
];
const ProductChart = () => (
  <svg width="277" height="176" viewBox="617 423 277 176">
    <ChartTitle x={756} y={439} w={187}>Sum of Profit by Sub-Category</ChartTitle>
    {products.map((p, i) => (
      <g key={p.name}>
        <rect x="673.500" y={460.5 + i * 22.9} width={p.end - 673.5} height="17.500" fill={p.fill} />
        <Label x={667} y={472.5 + i * 22.9} w={p.w} anchor="end">{p.name}</Label>
      </g>
    ))}
    <Label x={673.5} y={590} w={9.5} anchor="middle">0K</Label>
    <Label x={758.5} y={590} w={9.5} anchor="middle">2K</Label>
    <Label x={844} y={590} w={9.5} anchor="middle">4K</Label>
  </svg>
);

/* ---------- field list ---------- */
const Badge = ({ x, y }: { x: number; y: number }) => (
  <>
    <circle cx={x} cy={y} r="4.800" fill={GREEN} stroke="none" />
    <path stroke="#fff" strokeWidth="1.100" d={`M${x - 2.2} ${y}l1.700 1.600 2.700-3`} />
  </>
);
const Sigma = <Icon w={10} h={11}><path d="M9 3V.8H1l4.500 4.700L1 10.200h8V8" /></Icon>;
const TableGlyph = ({ badge }: { badge?: boolean }) => (
  <Icon w={11} h={10}>
    <path strokeWidth="1.200" d="M.6.600h9.800v8.800H.6zM.6 3.500h10M.6 6.500h10M4 .6v9M7.200 .6v9" />
    {badge && <Badge x={10.5} y={9} />}
  </Icon>
);
const Calc = (
  <Icon w={13} h={12}>
    <path strokeWidth="1.200" d="M8 9.500H.6V.6h10.400v5M.6 3.500h10.400M3.500 .6v9M.6 6.500h7M7 .6V8" />
    <path d="M12.500 7H9l2 2-2 2.300h3.500" />
  </Icon>
);
const Calendar = (
  <Icon w={14} h={12}>
    <path d="M.6 1.500h12.800v10H.6zM.6 4h13M3.500 0v2.500M10.500 0v2.500" />
    <path strokeDasharray="1.200 1.200" d="M2.500 6.500h9M2.500 9h6" />
    <Badge x={12} y={10.5} />
  </Icon>
);
const Hierarchy = (
  <Icon w={12} h={12}>
    <path d="M.5 .5h3v2.500h-3zM2 3v8M2 6h3M5 5h2.500v2.500H5zM2 10.500h3" />
    <Badge x={9} y={10} />
  </Icon>
);
type FieldRow = { t: string; level?: number; icon?: React.ReactNode; on?: boolean; open?: boolean };
const detailFields: FieldRow[] = [
  { t: "Amount", icon: Sigma }, { t: "Average Order V...", icon: Calc }, { t: "Category" }, { t: "Order ID" },
  { t: "PaymentMode" }, { t: "Profit", icon: Sigma }, { t: "Quantity", icon: Sigma }, { t: "Sub-Category" },
];
const orderFields: FieldRow[] = [
  { t: "City" }, { t: "CustomerName" }, { t: "Order Date", icon: Calendar, on: true, open: true },
  { t: "Date Hierarchy", icon: Hierarchy, on: true, open: true, level: 1 },
  { t: "Year", level: 2 }, { t: "Quarter", level: 2, on: true }, { t: "Month", level: 2 }, { t: "Day", level: 2 },
  { t: "Order ID" }, { t: "State" },
];
const Field = ({ t, level = 0, icon, on, open }: FieldRow) => (
  <TreeRow $indent={16 + level * 12.5}>
    <Slot $w={13}>{open && <TreeChevron />}</Slot>
    <Slot $w={15}>
      <Check $on={on}>
        {on && <Icon w={10} h={10} c="#fff" sw={1.2}><path d="M2 5l2 2.300L8.200 3" /></Icon>}
      </Check>
    </Slot>
    <Slot $w={19}>{icon}</Slot>
    {t}
  </TreeRow>
);
const TableRow = ({ name, badge }: { name: string; badge?: boolean }) => (
  <TreeRow $indent={5}>
    <Slot $w={11}><TreeChevron /></Slot>
    <Slot $w={18}><TableGlyph badge={badge} /></Slot>
    {name}
  </TreeRow>
);
const Close = () => <Icon w={8} h={8} c="#666"><path d="M.7.700l6.600 6.600M7.300.700L.7 7.300" /></Icon>;

/* ---------- taskbar apps ---------- */
const apps: { icon: React.ReactNode; dot?: boolean; on?: boolean }[] = [
  { dot: true, icon: <Icon w={20} h={20} c="none"><circle cx="10" cy="10" r="10" fill="#e94435" /><path fill="#34a853" d="M1.300 5A10 10 0 0 0 10 20l4.500-7.500z" /><path fill="#fbc116" d="M18.700 5A10 10 0 0 1 10 20l4.500-8-4.500-7z" /><circle cx="10" cy="10" r="5" fill="#fff" /><circle cx="10" cy="10" r="3.800" fill="#2f7de1" /></Icon> },
  { dot: true, icon: <Icon w={21} h={19} c="none"><path fill="#e8a723" d="M0 2q0-2 2-2h5l2.500 3H19q2 0 2 2v2H0z" /><path fill="#fbd35c" d="M0 6h21v11q0 2-2 2H2q-2 0-2-2z" /><path fill="#2b7fc4" d="M4.500 19v-3q0-2 2-2h8q2 0 2 2v3z" /></Icon> },
  { icon: <Icon w={20} h={20} c="none"><circle cx="10" cy="10" r="8.300" stroke="#9b9c9e" strokeWidth="3.400" strokeDasharray="3.900 2.600" /><circle cx="10" cy="10" r="7.500" fill="#8d9093" /><circle cx="10" cy="10" r="4.600" fill="#e8eef4" /><circle cx="10" cy="10" r="3.700" fill="#1e64ad" /></Icon> },
  { icon: <Icon w={21} h={20} c="none"><path fill="#2fb5e6" d="M0 10C0 4 4 0 11 0s10 5 10 8-3 5-6 5-3-1-2-3 0-4-3-4-5 3-5 6 3 7 7 8C5 20 0 16 0 10z" /><path fill="#5bd88c" d="M11 0c7 0 10 5 10 8s-3 5-6 5-3-1-2-3 1-5-4-6c3-2 7-1 9 2-1-4-4-6-7-6z" /><path fill="#2b8fe0" d="M2 14c3-6 8-8 12-7-3 3-2 6 1 7-3 3-7 6-13 0z" /><circle cx="6" cy="14.500" r="4.800" fill="#c8b7a6" /><path fill="#41322b" d="M2 12.500q3-5 7 0l-1 2-3-2-3 2zM3 17h6l-2 2H5z" /></Icon> },
  { icon: <Icon w={20} h={20} c="none"><path fill="#1b80c8" d="M15 0l5 2.500v15L15 20 1 6.500 3 4.500l12 9.500V6L3 15.500 1 13.500z" /><path fill="#3aa6ea" d="M15 0l5 2.500v15L15 20z" /></Icon> },
  { icon: <Icon w={18} h={18} c="none"><path fill="#2d6fe8" d="M3 0h15v14l-4 4H0V4z" /><path fill="#e9337f" d="M0 4l3-4h6L2 12H0z" /><path fill="#f68a2c" d="M0 12h4l3 6H0z" /><path fill="#0a0610" d="M2.500 2.500h13v13h-13z" /><text x="4.500" y="9.500" fontSize="7" fontWeight="700" fontFamily="Liberation Mono, monospace" letterSpacing="-.4" fill="#fff">IJ</text><path fill="#fff" d="M4 12.500h5v1H4z" /></Icon> },
  { icon: <Icon w={18} h={18} c="none"><path fill="#c9ee3f" d="M0 0h18v18H0z" /><path fill="#4fd66b" d="M0 0h5v18H0z" opacity=".6" /><path fill="#0b0f08" d="M2.500 2.500h13v13h-13z" /><text x="4" y="9.500" fontSize="7" fontWeight="700" letterSpacing="0" fill="#fff">PC</text><path fill="#fff" d="M4 12.500h5v1H4z" /></Icon> },
  { icon: <Icon w={18} h={20} c="none"><path fill="#5da945" d="M9 0l9 5v10l-9 5-9-5V5z" /><path fill="#74c05b" d="M9 0l9 5-12 8-6 2V5z" /><path fill="#45893a" d="M18 5v10l-9 5-3-7z" /></Icon> },
  { icon: <Icon w={20} h={20} c="none"><path fill="#ef8b1d" d="M6 1C-2 6-2 14 6 19 1 13 1 7 6 1z" /><circle cx="11" cy="10" r="8.500" fill="#342d74" /><path fill="#e8e6f2" d="M3 7h17v1.700H3zM3 9.600h17v1.700H3zM3 12.200h17v1.500H3z" /></Icon> },
  { icon: <Icon w={20} h={16} c="none"><path fill="#e0331f" d="M0 0h5l3 8 3-8h9l-6 16H9.500L8 12l-1.500 4H4z" /><path stroke="#7d140c" d="M4 3l3.500 10M11 3L8 11M15 1l-4 12" /></Icon> },
  { dot: true, icon: <Icon w={22} h={22} c="#c4c4c4" sw={1.5}><circle cx="11" cy="11" r="9" fill="#232323" /><path fill="#c4c4c4" stroke="none" d="M11 3a4 4 0 0 1 2 7 4 4 0 0 0-5-4 5 5 0 0 1 3-3zM4 12a4 4 0 0 1 6 3 4 4 0 0 0 5-1 5 5 0 0 1-8 3 6 6 0 0 1-3-5zM18 10a4 4 0 0 1-5 1 4 4 0 0 0 3 4 5 5 0 0 0 2-5z" /><circle cx="18.500" cy="4" r="5.200" fill="#e60000" stroke="none" /></Icon> },
  { icon: <Icon w={18} h={16} c="none"><path fill="#51708f" d="M0 0h18v16H0z" /><path fill="#2f6bb0" d="M0 0h18v3H0z" /><path fill="#6b7f94" d="M1 4h16v11H1z" /><text x="2" y="9" fontSize="4.500" fontWeight="700" letterSpacing="0" fill="#e8eef4">SQL&gt;</text></Icon> },
  { on: true, icon: <Icon w={18} h={20} c="none"><path fill="#e0a412" d="M9 0h8v20H9z" /><path fill="#eec024" d="M4.500 5.500h9V20h-9z" /><path fill="#f9dc5c" d="M0 11h8v9H0z" /></Icon> },
];

const SelectionFrame = () => (
  <svg width="226" height="47" viewBox="0 0 226 47" fill="none">
    <path stroke="#a9a4bf" strokeWidth="1.300" d="M2 2h222v43H2z" />
    <path stroke="#a9a6b2" strokeWidth="3" d="M1.500 8V1.500H8M218 1.500h6.500V8M1.500 39v6.500H8M218 45.500h6.500V39M108 1.500h10M108 45.500h10M1.500 19v9M224.500 19v9" />
  </svg>
);

export default function App() {
  return (
    <Window>
      <Global />
      <TitleBar>
        <QuickAccess>
          <Icon w={14} h={14} c="#e8e8e8" sw={1.2}><path d="M1 1h12v12H1zM3.500 1v4.500h7V1M4 13V9h6v4M7.500 11v2" /></Icon>
          <Icon w={14} h={14} c="#e8e8e8" sw={1.2}><path d="M2 .5v5h5M2 5.500C5 1.500 9 .5 11 3s1 5-4.500 10" /></Icon>
          <Icon w={14} h={14} c="#777" sw={1.2}><path d="M12 .5v5H7M12 5.500C9 1.500 5 .5 3 3s-1 5 4.500 10" /></Icon>
        </QuickAccess>
        <WindowTitle>First_tutot - Power BI Desktop</WindowTitle>
        <WindowControls>
          <SignIn>Sign in</SignIn>
          <Icon w={17} h={17} c="#3b3a37" sw={1.1}>
            <circle cx="8.500" cy="8.500" r="8.500" fill="#f4f4f0" stroke="none" />
            <circle cx="8.500" cy="5" r="2.500" /><path d="M4 9h9c0 4-2 5.500-4.500 5.500S4 13 4 9z" />
          </Icon>
          <Control $gap={27}><Icon w={10} h={10} c="#fff" sw={1.1}><path d="M0 5.500h9" /></Icon></Control>
          <Control $gap={27}><Icon w={10} h={10} c="#fff" sw={1.1}><path d="M1 3h6v6H1zM3 3V1h6v6H7" /></Icon></Control>
          <Control $gap={28}><Icon w={9} h={9} c="#fff" sw={1.2}><path d="M1 1l7.500 7.500M8.500 1L1 8.500" /></Icon></Control>
        </WindowControls>
      </TitleBar>

      <TabRow>
        <Tab $w={54}><span>File</span></Tab>
        <Tab $w={59} $on><span>Home</span></Tab>
        <Tab $w={55}><span>Insert</span></Tab>
        <Tab $w={75}><span>Modeling</span></Tab>
        <Tab $w={52}><span>View</span></Tab>
        <Tab $w={49}><span>Help</span></Tab>
        <Tab $w={63} $white><span>Format</span></Tab>
        <TabGap $w={4} />
        <Tab $w={83} $white><span>Data / Drill</span></Tab>
      </TabRow>

      <Ribbon>
        <Group $w={134}>
          <GroupBody $pad={4}>
            <Big w={38} icon="paste" a="Paste" dim nudge={3} />
            <SmallButtons>
              <SmallButton>
                <Icon w={12} h={13}><path stroke="#444" d="M3 0l4.500 9M9 0L4.500 9" /><circle cx="3" cy="10.500" r="1.800" stroke={DEEP} /><circle cx="9" cy="10.500" r="1.800" stroke={DEEP} /></Icon>
                Cut
              </SmallButton>
              <SmallButton>
                <Icon w={13} h={13}><path fill="#fff" d="M.5 1h4v10h-4zM4.500 3.500h4l4 3v6h-8zM7 8h3M7 10h3" /></Icon>
                Copy
              </SmallButton>
              <SmallButton>
                <Icon w={13} h={13}><path stroke="#e07a3c" fill="#f8dcc4" d="M.7 7l4-2.500 4 4L6 12z" /><path fill="#fff" d="M5 4.500L7 3l1 1 3-3 .8.800-3 3 1 1-1.500 2z" /></Icon>
                Format painter
              </SmallButton>
            </SmallButtons>
          </GroupBody>
          <GroupLabel>Clipboard</GroupLabel>
        </Group>
        <Group $w={288}>
          <GroupBody $pad={5}>
            <Big w={36} icon="get" a="Get" b="data" caret nudge={3} />
            <Big w={46} icon="excel" a="Excel" b="workbook" nudge={3} />
            <Big w={34} icon="hub" a="Data" b="hub" caret />
            <Big w={32} icon="sql" a="SQL" b="Server" nudge={4} />
            <Big w={34} icon="enter" a="Enter" b="data" />
            <Big w={48} icon="verse" a="Dataverse" />
            <Big w={44} icon="recent" a="Recent" b="sources" caret nudge={4} />
          </GroupBody>
          <GroupLabel>Data</GroupLabel>
        </Group>
        <Group $w={97}>
          <GroupBody $pad={5}>
            <Big w={50} icon="transform" a="Transform" b="data" caret />
            <Big w={32} icon="refresh" a="Refresh" nudge={5} />
          </GroupBody>
          <GroupLabel>Queries</GroupLabel>
        </Group>
        <Group $w={122}>
          <GroupBody $pad={7}>
            <Big w={32} icon="newvis" a="New" b="visual" />
            <Big w={35} icon="text" a="Text" b="box" />
            <Big w={39} icon="more" a="More" b="visuals" caret nudge={2} />
          </GroupBody>
          <GroupLabel>Insert</GroupLabel>
        </Group>
        <Group $w={96}>
          <GroupBody $pad={7}>
            <Big w={40} icon="measure" a="New" b="measure" />
            <Big w={42} icon="quick" a="Quick" b="measure" nudge={-3} />
          </GroupBody>
          <GroupLabel>Calculations</GroupLabel>
        </Group>
        <Group $w={61}>
          <GroupBody $pad={7}>
            <Big w={44} icon="sens" a="Sensitivity" caret dim nudge={2} />
          </GroupBody>
          <GroupLabel>Sensitivity</GroupLabel>
        </Group>
        <Group $w={49}>
          <GroupBody $pad={3}>
            <Big w={42} icon="publish" a="Publish" nudge={2} />
          </GroupBody>
          <GroupLabel>Share</GroupLabel>
        </Group>
        <RibbonEnd>
          <Icon w={7} h={6} sw={1.2}><path d="M.7 5l2.800-3 2.800 3" /></Icon>
        </RibbonEnd>
      </Ribbon>

      <Body>
        <Rail>
          <RailItem $on>
            <Icon w={13} h={12}><path d="M.7 0v11.300H13M3 10V4h2v6M6 10V5.500h2V10M9.500 10V2h2v8z" /></Icon>
          </RailItem>
          <RailItem>
            <Icon w={15} h={13} c="#8a8a88"><path d="M.6.600h13.800v11.800H.6zM.6 4.500h14M.6 8.500h14M5 .6v12M10 .6v12" /></Icon>
          </RailItem>
          <RailItem>
            <Icon w={17} h={16} c="#8a8a88"><path d="M.6 5.500h6v5h-6zM9.500 .6h6v4h-6zM9.500 6.600h6v3h-6zM9.500 11.600h6v4h-6zM9.500 2.500h-5v3M6.600 8h3M4.500 10.500v3h5" /></Icon>
          </RailItem>
        </Rail>

        <Center>
          <Stage>
            <Tip>Report view</Tip>
            <Canvas>
              <Kpi $x={12} $y={40} $w={127} $h={79} $r={22} $line="#6d4c86" $glow>
                <KpiValue>8763</KpiValue><KpiName>Sum of Profit</KpiName>
              </Kpi>
              <Kpi $x={148} $y={40} $w={127} $h={79} $r={22} $line="#74528c" $glow>
                <KpiValue>2498</KpiValue><KpiName>Average Order Value</KpiName>
              </Kpi>
              <Kpi $x={288} $y={40} $w={127} $h={79} $r={22} $line="#7a5793" $glow>
                <KpiValue>1264</KpiValue><KpiName>Sum of Quantity</KpiName>
              </Kpi>
              <Heading $x={331} $y={0} $w={249} $h={40} $r={18} $line="#7d5f94" $glow>My Dashboard</Heading>
              <Panel $x={92} $y={135} $w={226} $h={138} $r={20} $line="#bd97cb"><PieChart /></Panel>
              <Slicer $x={516} $y={41} $w={224} $h={45} $r={20} $line="#4b5bb0" $glow>
                <Quarter $on>Qtr 1</Quarter><Quarter>Qtr 2</Quarter><Quarter>Qtr 3</Quarter><Quarter>Qtr 4</Quarter>
              </Slicer>
              <Overlay $x={515} $y={40}><SelectionFrame /></Overlay>
              <Overlay $x={674} $y={20}><HeaderIcon $green /><HeaderIcon $green /><HeaderIcon $green /></Overlay>
              <Overlay $x={757} $y={76}>
                <HeaderIcon><Icon w={13} h={12} c="#777"><path d="M.7 .7h11.600L8 6v5L5 9V6z" /></Icon></HeaderIcon>
                <HeaderIcon><Icon w={13} h={12} c="#777"><path d="M6 2H.7v9.300h11.600V6M8 1h4.300v4M12 1L7.500 5.500M1 7h4v4" /></Icon></HeaderIcon>
                <HeaderIcon><Icon w={13} h={3} c="none"><path fill="#666" d="M0 .7h2v1.600H0zM5.500 .7h2v1.600h-2zM11 .7h2v1.600h-2z" /></Icon></HeaderIcon>
              </Overlay>
              <Panel $x={432} $y={96} $w={392} $h={185} $r={20} $line="#8d6a9c"><MonthChart /></Panel>
              <Panel $x={26} $y={290} $w={257} $h={176} $line="#83648d"><PaymentDonut /></Panel>
              <Panel $x={303} $y={290} $w={244} $h={176} $line="#a06b9e"><CategoryDonut /></Panel>
              <Panel $x={566} $y={290} $w={277} $h={176} $line="#93588f"><ProductChart /></Panel>
              <Overlay $x={606} $y={123}>
                <Icon w={13} h={18} c="none"><path fill="#fff" d="M1 0v15l3.500-3.300 3 5.500 2.500-1.300-3-5.200h5z" /></Icon>
              </Overlay>
            </Canvas>
          </Stage>
          <PageBar>
            <PageArrows>
              <Icon w={5} h={7} c="none"><path fill="#bcbcba" d="M5 0v7L0 3.500z" /></Icon>
              <Icon w={5} h={7} c="none"><path fill="#bcbcba" d="M0 0v7l5-3.500z" /></Icon>
            </PageArrows>
            <PageTab>Page 1</PageTab>
            <AddPage><Icon w={10} h={10} c="#fff" sw={2.4}><path d="M5 0v10M0 5h10" /></Icon></AddPage>
          </PageBar>
        </Center>

        <Filters>
          <DoubleChevron left />
          <FilterMark>
            <Icon w={10} h={10}><path d="M9.300 .7v8.600L5 6.500H2L.8 3.500H5z" /></Icon>
          </FilterMark>
          <FiltersName>Filters</FiltersName>
        </Filters>

        <VizPane>
          <PaneHead $pad="0 6px 0 7px">Visualizations<DoubleChevron /></PaneHead>
          <BuildLabel>Build visual</BuildLabel>
          <ModeRow>
            <Mode $on>
              <Icon w={20} h={20}><path d="M0 1.500h16" /><path fill="#1c8463" stroke="#1b4f3d" strokeDasharray="1.500 1" d="M.5 5.500h19v5H.5zM.5 14.500h19v5H.5z" /></Icon>
            </Mode>
            <Mode>
              <Icon w={19} h={20} sw={1.2}><path d="M.7 16V8.500h4V17M4.700 8.500V1.500h5V10M9.700 4.500h4V8M1 17.500h6" /><path fill="#f1f2ee" d="M18 6.500l-7 8-2-1.500zM9 13c-3 0-2 4-5 5 3 1.500 7 0 7-3.500z" /></Icon>
            </Mode>
            <Mode>
              <Icon w={20} h={20} sw={1.2}><circle cx="8.500" cy="8.500" r="7.500" /><path strokeWidth="2" d="M14 14l5.500 5.500" /><path d="M2 9l4-3 3 2 5-4M4.500 14V10M7 15.500V9M9.500 15.500V11M12 14V8" /></Icon>
            </Mode>
            <Notch>
              <Icon w={13} h={8} c="#8f908d"><path fill="#f1f2ee" d="M0 7.500l6.500-6 6.500 6" /></Icon>
            </Notch>
          </ModeRow>
          <VizGrid>
            {gallery.map((g, i) => <VizCell key={i} $on={i === 24}>{g}</VizCell>)}
          </VizGrid>
          <FieldBlock>
            <FieldTitle>Field</FieldTitle>
            <Well $mt={4} $h={46}>
              <Chip>
                <ChipRow $pad={2}><span>Order Date</span><Icon w={10} h={7} c="#666"><path d="M.7 1l4.300 4.500L9.300 1" /></Icon><Close /></ChipRow>
                <ChipRow $pad={8}><span>Quarter</span><Close /></ChipRow>
              </Chip>
            </Well>
            <FieldTitle $strong>Drill through</FieldTitle>
            <OptionRow $mt={7}>Cross-report<Toggle><i />Off</Toggle></OptionRow>
            <OptionRow $mt={9}>Keep all filters<Toggle $on><i />On</Toggle></OptionRow>
            <Well $mt={8} $h={22}><WellHint>Add drill-through fields here</WellHint></Well>
          </FieldBlock>
        </VizPane>

        <DataPane>
          <PaneHead $pad="0 4px 0 7px">Data<DoubleChevron /></PaneHead>
          <SearchBox>
            <Icon w={13} h={13} c="#666"><circle cx="8" cy="5" r="4" /><path d="M5.200 8L.8 12.300" /></Icon>
            Search
          </SearchBox>
          <TableRow name="Details" />
          {detailFields.map((f) => <Field key={f.t} {...f} />)}
          <TableRow name="Orders" badge />
          {orderFields.map((f) => <Field key={f.t} {...f} />)}
        </DataPane>
      </Body>

      <StatusBar>
        <span>Page 1 of 1</span>
        <Zoom>
          <Icon w={103} h={12} c="#555"><path d="M0 6.500h4M8 6.500h82M94.500 6.500h6M97.500 3.500v6" /><path stroke="#444" strokeWidth="3" d="M42 2v9" /><path strokeWidth="1.500" d="M49.500 4.500v4" /></Icon>
          <span>83%</span>
          <Icon w={14} h={11} c="#777"><path d="M.6.600h12.800v9.800H.6z" /><path d="M3 4.500V3h2M9 3h2v1.500M3 6.500V8h2M9 8h2V6.500" /></Icon>
        </Zoom>
      </StatusBar>

      <Taskbar>
        <Icon w={21} h={20} c="none"><path fill="#62cdf5" d="M0 0h10v9.500H0zM11 0h10v9.500H11z" /><path fill="#43b6ec" d="M0 10.500h10V20H0zM11 10.500h10V20H11z" /></Icon>
        <TaskSearch>
          <Icon w={13} h={13} c="#eee" sw={1.5}><circle cx="5.500" cy="5.500" r="4.500" /><path d="M9 9l3.500 3.500" /></Icon>
          <span>Search</span>
          <Icon w={40} h={20} c="none">
            <path fill="#d9dbe0" d="M9 19L1 9l5 3-3-9 5 6 1-7 3 8 5-5-2 9-3 4z" />
            <path stroke="#a8a9b2" d="M9 18L5 8M10 18l1-10M11 17l4-7" />
            <path stroke="#c7a93a" strokeWidth="1.500" d="M12 18c6 2 10 1 14-3M14 17c6-4 10-8 6-15" />
            <path stroke="#7b9a3a" strokeWidth="1.500" d="M14 14c6 3 9 4 14 3" />
            <path fill="#dcc15b" d="M25 14c3-4 7-5 10-3 0 4-3 7-7 7z" />
            <path stroke="#7a4a2a" d="M33 12l5-10M34 13l6-1M34 12l2-9" />
          </Icon>
        </TaskSearch>
        {apps.map((a, i) => <TaskItem key={i} $dot={a.dot} $on={a.on}>{a.icon}</TaskItem>)}
        <Tray>
          <TrayIcon $ml={0}><Icon w={10} h={7} c="#fff" sw={1.5}><path d="M1 6l4-4.500L9 6" /></Icon></TrayIcon>
          <TrayIcon $ml={15}><Icon w={14} h={14} c="#ccc" sw={1.2}><circle cx="7" cy="7" r="6.200" /><path fill="#ccc" stroke="none" d="M7 2a3 3 0 0 1 1 5 3 3 0 0 0-4-2 4 4 0 0 1 3-3zM12 7a3 3 0 0 1-4 2 3 3 0 0 0 1 3 4 4 0 0 0 3-5z" /><circle cx="3" cy="11" r="2.800" fill="#e21b1b" stroke="none" /></Icon></TrayIcon>
          <TrayIcon $ml={15}><Icon w={10} h={14} c="#6cb4ae" sw={1.2}><path fill="#3f837f" d="M3 3a2 2 0 0 1 4 0v4a2 2 0 0 1-4 0z" /><path d="M.8 6.500c0 5.500 8.400 5.500 8.400 0M5 10.500V14" /></Icon></TrayIcon>
          <TrayText $ml={17}>ENG<br />IN</TrayText>
          <TrayIcon $ml={16}><Icon w={12} h={11} c="#eee" sw={1.3}><path d="M1 4.500c3-3.500 7-3.500 10 0M2.800 6.500c2-2.200 4.500-2.200 6.500 0M4.500 8.300c1-1 2-1 3 0" /><circle cx="6" cy="9.800" r=".8" fill="#eee" /></Icon></TrayIcon>
          <TrayIcon $ml={7}><Icon w={14} h={12} c="#eee" sw={1.1}><path d="M.6 4h2.500L6 1.200v9.600L3.100 8H.6zM8 4.200c1 1 1 2.600 0 3.600M9.800 2.500c2 2 2 5 0 7M11.600 1c2.600 3 2.600 7 0 10" /></Icon></TrayIcon>
          <TrayIcon $ml={6}><Icon w={14} h={11} c="#eee" sw={1.2}><path d="M6 2.500h5.500v7H2V7M12.800 4.500v3" /><path fill="#eee" d="M3.500 0L1 4h2L2 7l3.500-4h-2z" strokeWidth=".5" /></Icon></TrayIcon>
          <TrayText $ml={13} $right>23:28<br />24/03/2023</TrayText>
        </Tray>
      </Taskbar>
    </Window>
  );
}
